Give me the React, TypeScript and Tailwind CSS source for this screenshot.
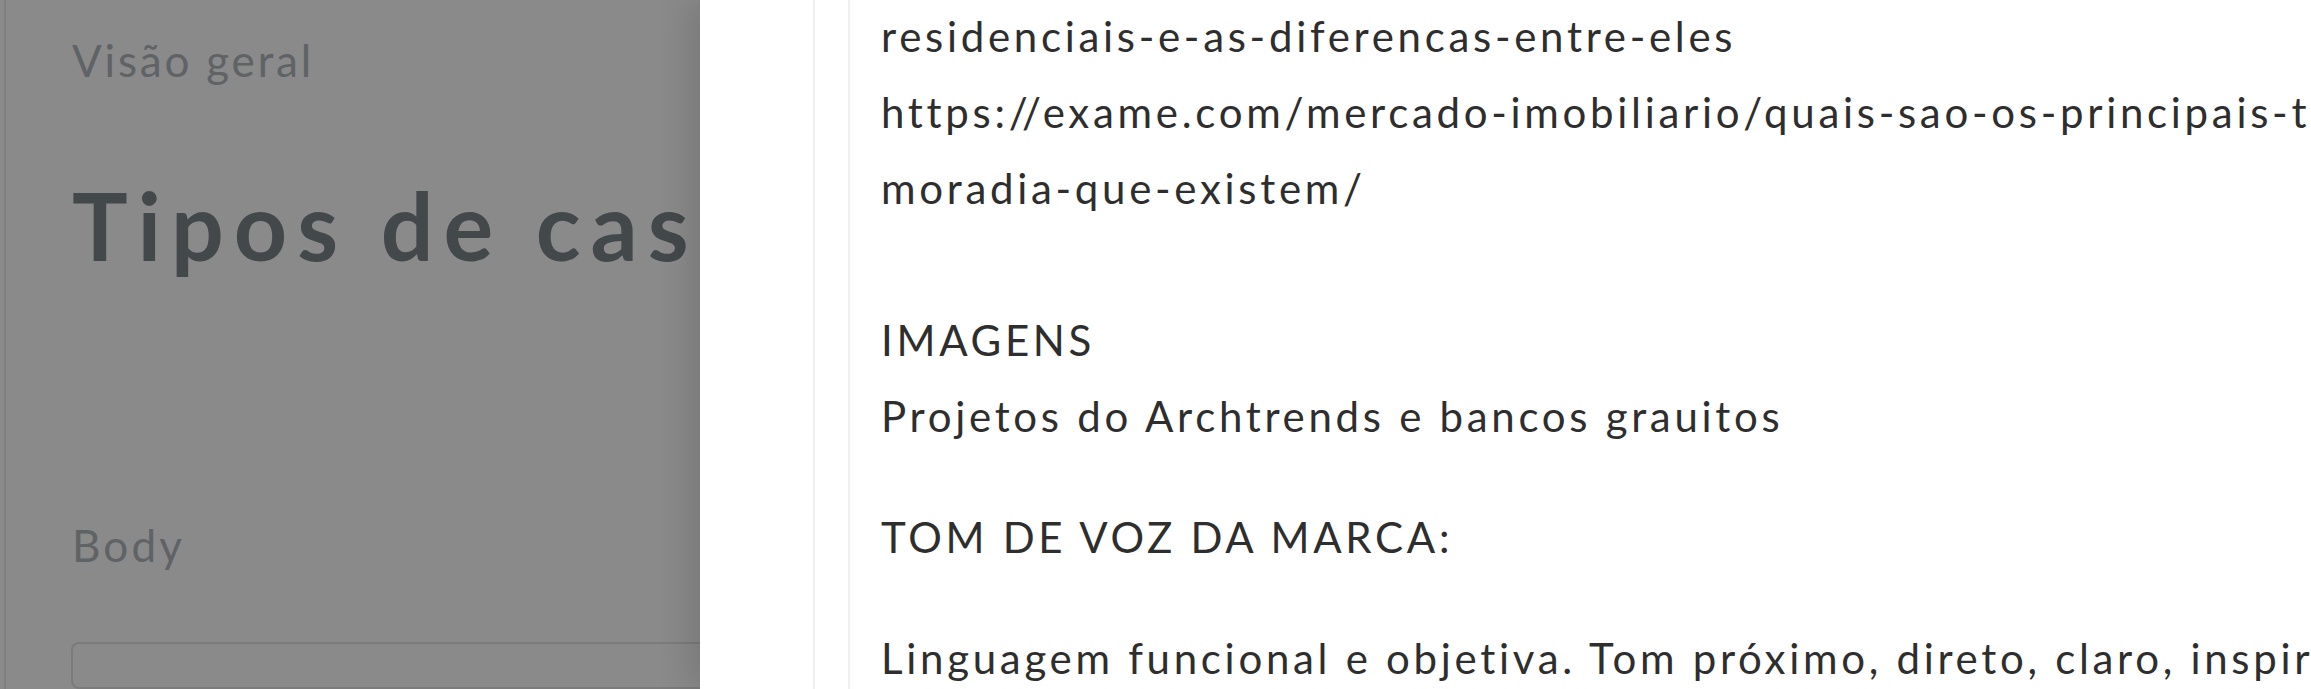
function Backdrop() {
    return (
        <div className="flex h-full w-full bg-white">
            <div className="w-[4px] h-full" />
            <div className="w-[2px] h-full bg-[#ececec]" />
            <div className="flex flex-col pl-[66px] pt-[38px]">
                <h4 className="text-[44px] leading-[44px] tracking-[2.8px] text-[#b0b7bd] whitespace-nowrap">Visão geral</h4>
                <h1 className="mt-[97px] text-[93px] leading-[93px] font-bold tracking-[10px] text-[#7c858b] whitespace-nowrap">Tipos de casa</h1>
                <h4 className="mt-[251px] text-[44px] leading-[44px] tracking-[3.2px] text-[#b0b7bd]">Body</h4>
                <div className="mt-[75px] -ml-[1px] w-[1400px] h-[200px] border-2 border-[#e4e4e4] rounded-lg" />
            </div>
        </div>
    )
}

function Drawer() {
    return (
        <div className="absolute top-0 bottom-0 left-[700px] right-0 bg-white shadow-[-12px_0_30px_rgba(0,0,0,0.12)] flex overflow-hidden">
            <div className="w-[113px] shrink-0" />
            <div className="w-[2px] shrink-0 bg-[#eeeeee]" />
            <div className="w-[33px] shrink-0" />
            <div className="w-[2px] shrink-0 bg-[#efefef]" />
            <div className="pl-[31px] -mt-[2px] text-[42px] leading-[76px] tracking-[3.7px] text-[#2e2e2e] whitespace-nowrap">
                <p>
                    residenciais-e-as-diferencas-entre-eles<br />
                    https://exame.com/mercado-imobiliario/quais-sao-os-principais-tipos-de-<br />
                    moradia-que-existem/<br />
                    <br />
                    IMAGENS<br />
                    Projetos do Archtrends e bancos grauitos
                </p>
                <p className="mt-[45px]">TOM DE VOZ DA MARCA:</p>
                <p className="mt-[45px]">Linguagem funcional e objetiva. Tom próximo, direto, claro, inspirador e sofisticado.</p>
            </div>
        </div>
    )
}

export default function App() {
    return (
        <section className="relative w-[2311px] h-[689px] overflow-hidden font-['Lato',sans-serif]">
            <Backdrop />
            <div className="absolute inset-0 bg-black/[0.46]" />
            <Drawer />
        </section>
    )
}
